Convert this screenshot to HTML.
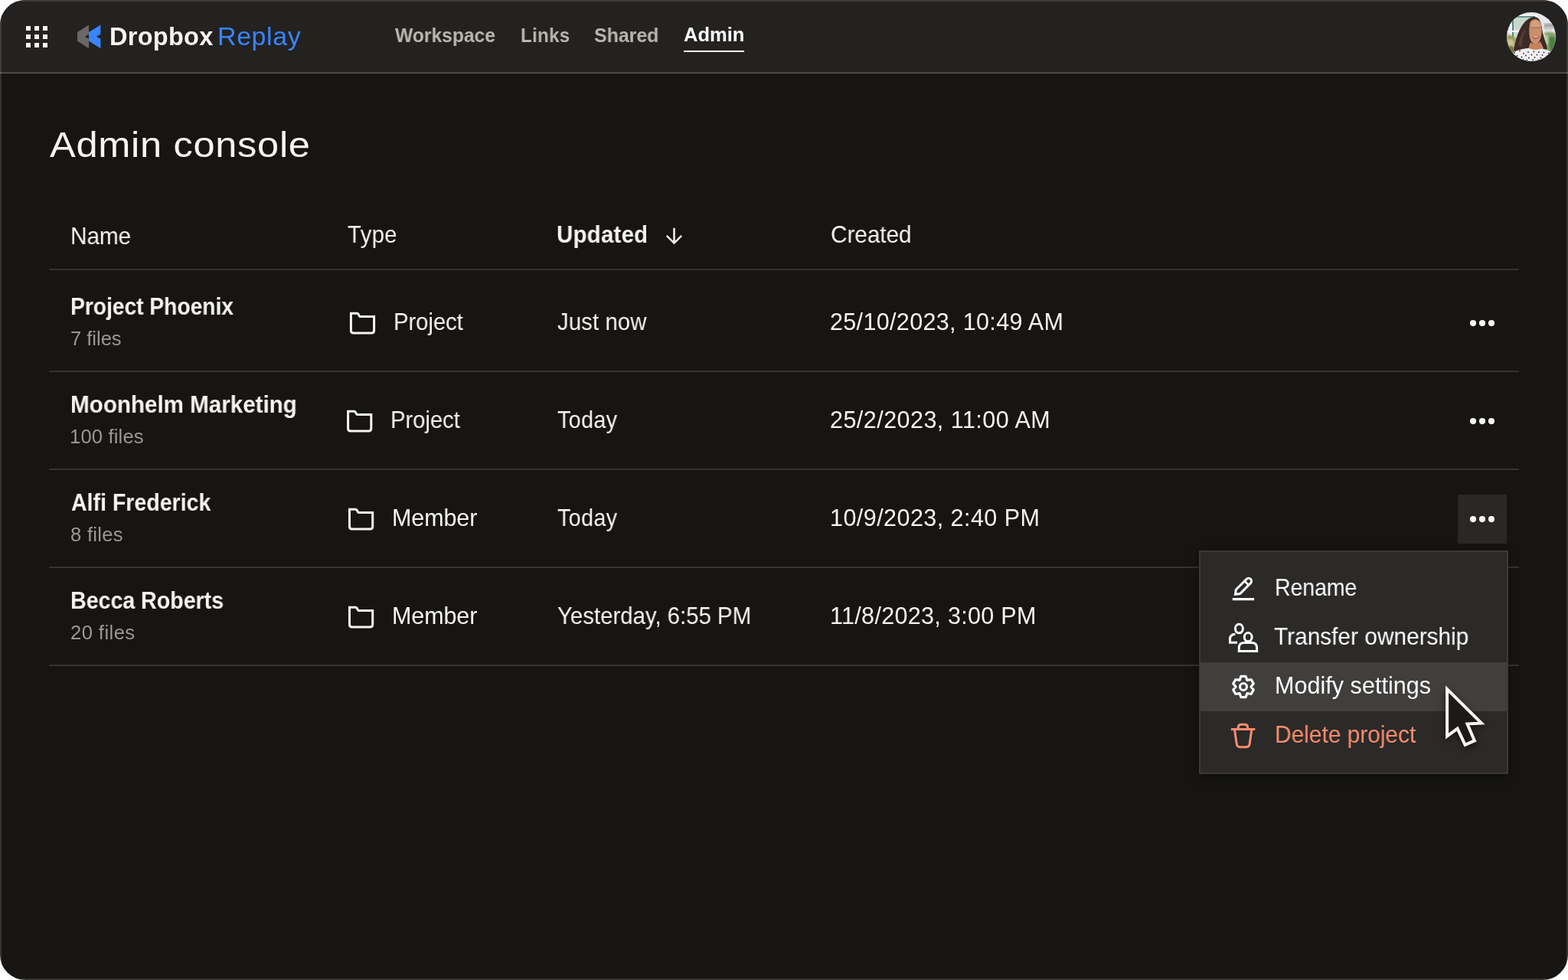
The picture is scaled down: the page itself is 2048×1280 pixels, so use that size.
<!DOCTYPE html>
<html lang="en">
<head>
<meta charset="utf-8">
<meta name="viewport" content="width=2048">
<title>Dropbox Replay – Admin console</title>
<style>
*{box-sizing:border-box;margin:0;padding:0}
html,body{width:2048px;height:1280px;overflow:hidden;background:#fff}
body{font-family:"Liberation Sans",Arial,Helvetica,sans-serif;color:#f7f5f2;position:relative}
.frame{position:absolute;left:0;top:0;width:2048px;height:1280px;border-radius:33px;background:#161513;overflow:hidden}
.frame-border{position:absolute;left:0;top:0;width:2048px;height:1280px;border:2px solid rgba(255,255,255,.13);pointer-events:none;z-index:50}
header{position:absolute;left:0;top:0;width:2048px;height:96px;background:linear-gradient(to bottom,#232220 0,#232220 94px,#3d3c3a 94px,#3d3c3a 95px,#5a5958 95px,#5a5958 96px)}
a{color:inherit;text-decoration:none}
h1{font-weight:400}
.t{position:absolute;white-space:nowrap;line-height:1;font-weight:400;color:#f7f5f2;will-change:transform}
.b{font-weight:700}
.sub{color:#9a9792}
.blue{color:#3984ff}
.nav{color:#bbb5ae;font-weight:700}
.nav.on{color:#fff}
.navline{position:absolute;left:893px;top:66px;width:79px;height:2px;background:#fff}
.hl{position:absolute;left:64px;width:1920px;height:2px;background:#343331}
svg{position:absolute;overflow:visible}
.more{position:absolute;left:1904px;width:64px;height:64px}
.more.open{background:#292826}
.menu{position:absolute;left:1566px;top:719px;width:404px;height:292px;background:#2b2a28;border:2px solid #3b3936;box-shadow:0 4px 14px rgba(0,0,0,.35);list-style:none}
.menu li{list-style:none}
.menu li.sel::before{content:"";position:absolute;left:0;top:144px;width:400px;height:64px;background:#403f3d}
.mi{color:#fff}
.del{color:#fa8d6e}
</style>
</head>
<body>
<div class="frame">
<header>
  <svg width="30" height="30" style="left:33px;top:33px" viewBox="0 0 30 30" role="img" aria-label="Apps">
    <g fill="#f7f5f2">
      <rect x="1" y="1" width="6" height="6"/><rect x="12" y="1" width="6" height="6"/><rect x="23" y="1" width="6" height="6"/>
      <rect x="1" y="12" width="6" height="6"/><rect x="12" y="12" width="6" height="6"/><rect x="23" y="12" width="6" height="6"/>
      <rect x="1" y="23" width="6" height="6"/><rect x="12" y="23" width="6" height="6"/><rect x="23" y="23" width="6" height="6"/>
    </g>
  </svg>
  <a class="brand" aria-label="Dropbox Replay">
    <svg width="32" height="32" style="left:100px;top:32px" aria-hidden="true"><g transform="translate(-100 -32)"><path fill="#6b6764" d="M116 32.4 L101 42 L101 53.6 L116 63.2 L116 50.8 L110.9 47.8 L116 44.8 Z"/><path fill="#3984ff" d="M131.4 32.4 L116 42 L116 53.6 L131.4 63.2 L131.4 50.8 L125.9 47.8 L131.4 44.8 Z"/></g></svg>
    <span class="t b" id="logo1" style="left:143.30px;top:32.08px;font-size:32.5px;letter-spacing:0.279px">Dropbox</span>
    <span class="t blue" id="logo2" style="left:284.08px;top:29.81px;font-size:34px;letter-spacing:0.573px">Replay</span>
  </a>
  <nav aria-label="Primary">
    <a class="t nav" id="nav1" style="left:516.20px;top:34.31px;font-size:25.5px;letter-spacing:-0.066px;transform:scaleX(0.969);transform-origin:0 50%">Workspace</a>
    <a class="t nav" id="nav2" style="left:679.68px;top:34.31px;font-size:25.5px;letter-spacing:0.390px;transform:scaleX(0.94);transform-origin:0 50%">Links</a>
    <a class="t nav" id="nav3" style="left:776.30px;top:34.31px;font-size:25.5px;letter-spacing:-0.076px;transform:scaleX(0.98);transform-origin:0 50%">Shared</a>
    <a class="t nav on" id="nav4" aria-current="page" style="left:892.56px;top:32.51px;font-size:25.5px;letter-spacing:-0.012px">Admin</a>
    <span class="navline"></span>
  </nav>
  <svg width="64" height="64" style="left:1968px;top:16px" viewBox="0 0 64 64" role="img" aria-label="User avatar">
  <defs>
    <clipPath id="av"><circle cx="32" cy="32" r="32"/></clipPath>
    <filter id="avb" x="-10%" y="-10%" width="120%" height="120%"><feGaussianBlur stdDeviation="0.7"/></filter>
    <filter id="avb2" x="-20%" y="-20%" width="140%" height="140%"><feGaussianBlur stdDeviation="1.3"/></filter>
  </defs>
  <g clip-path="url(#av)">
    <rect width="64" height="64" fill="#e7e8ea"/>
    <g filter="url(#avb)">
      <rect x="4" y="3" width="36" height="40" fill="#f1f2f1"/>
      <rect x="9" y="6.5" width="28" height="17" fill="#c7d8cb"/>
      <rect x="9" y="26" width="14" height="14" fill="#cfdccf"/>
      <rect x="11" y="5" width="26" height="1.8" fill="#5e8a8d"/>
      <rect x="7" y="9" width="2" height="30" fill="#5a858a"/>
      <rect x="0" y="23.8" width="18" height="2.2" fill="#f4f5f4"/>
      <rect x="48.5" y="14" width="13" height="8" fill="#c4c4c7"/>
      <rect x="49.5" y="15.5" width="11" height="3.5" fill="#aaaaae"/>
      <rect x="50" y="22" width="9" height="3" fill="#dcdcd8"/>
    </g>
    <g filter="url(#avb2)">
      <path d="M0 30 Q6 28 12 34 L14 52 L0 56 Z" fill="#9a9d58"/>
      <path d="M1 36 Q5 33 9 38 L10 46 L2 47 Z" fill="#c9c79a"/>
      <path d="M2 44 Q7 42 11 47 L11 54 L3 55 Z" fill="#6f7a3a"/>
      <path d="M49 27 Q56 24 64 28 V52 H52 Z" fill="#7fa066"/>
      <path d="M55 33 Q60 30 64 34 V50 H56 Z" fill="#4f7c43"/>
      <path d="M49 30 Q52 28 54 32 L54 42 L50 42 Z" fill="#b9cfa8"/>
    </g>
    <g filter="url(#avb)">
      <path d="M35 6 C29 7 23 12 19 19 C15 26 12.5 33 10.5 42 C9.5 47 9.5 50 10 52 L30 52 L50 50 C53.5 49 53 47 52 43 C50.5 38 48.5 33 47 27 C46 19 44.5 12 42 9 C40 6.5 37.5 5.8 35 6 Z" fill="#3b2a25"/>
      <path d="M22 22 C19 28 16 36 15 44 L20 46 C20 38 22 30 25 24 Z" fill="#513a31"/>
      <path d="M30 15 C31 10.5 35 9 38 9.3 C42 9.8 45 13 45.6 19 C46.2 25 45.5 31 43.5 36 C42 39.5 40 41.5 37.5 41.5 C34.5 41.5 32 39 30.6 35 C29 30 29 21 30 15 Z" fill="#c98f6b"/>
      <path d="M33 12 C35 10.5 39 10.5 41.5 13 C43 15 43.5 18 43.5 20 L32 20 C32 17 32 14 33 12 Z" fill="#d6a07c"/>
      <path d="M30.5 20 H45.5" stroke="#8a6a5c" stroke-width="0.9" fill="none"/>
      <path d="M33.5 31 Q37.8 33 42 30.6 Q41.5 34.8 37.8 35 Q34.5 35 33.5 31 Z" fill="#b5525c"/>
      <path d="M34.3 31.3 Q37.8 32.8 41.3 31 Q40.5 33 37.8 33.1 Q35.3 33.1 34.3 31.3 Z" fill="#f3e6e0"/>
      <path d="M31 39 C33 42 41 42 44 38 L48 47 C44 50 34 50 28 48 Z" fill="#c4835f"/>
      <path d="M7 54 C10 50 20 47.5 29 47 C33 49.5 41 49.5 46 47.5 C52 48.5 57 51 60 54 L58 66 H8 Z" fill="#f2f0f1"/>
    </g>
    <g fill="#2c2c46">
      <circle cx="10" cy="53" r="0.9"/><circle cx="17" cy="50.5" r="0.9"/><circle cx="22" cy="54" r="0.9"/><circle cx="28" cy="52" r="0.9"/>
      <circle cx="35.5" cy="51.5" r="0.9"/><circle cx="42" cy="52" r="0.9"/><circle cx="48.5" cy="52.5" r="0.9"/><circle cx="54.5" cy="53.5" r="0.9"/>
      <circle cx="13.5" cy="57" r="0.9"/><circle cx="19.5" cy="58.5" r="0.9"/><circle cx="25" cy="56.5" r="0.9"/><circle cx="32.5" cy="55.5" r="0.9"/>
      <circle cx="39.5" cy="55.5" r="0.9"/><circle cx="46.5" cy="56" r="0.9"/><circle cx="52" cy="57.5" r="0.9"/>
      <circle cx="21.5" cy="62" r="0.9"/><circle cx="29" cy="59.5" r="0.9"/><circle cx="36.5" cy="59" r="0.9"/><circle cx="44.5" cy="59.5" r="0.9"/>
      <circle cx="34" cy="62.5" r="0.9"/><circle cx="41.5" cy="62.5" r="0.9"/><circle cx="26.5" cy="62.8" r="0.9"/>
    </g>
  </g>
</svg>
</header>
<main>
  <h1 class="t" id="title" style="left:65.20px;top:166.05px;font-size:46px;letter-spacing:0.610px;transform:scaleX(1.1);transform-origin:0 50%">Admin console</h1>
  <div role="table" aria-label="Projects and members">
    <div role="row" class="thead">
      <span class="t" id="h1" role="columnheader" style="left:92.15px;top:293.38px;font-size:30.5px;letter-spacing:-0.100px;transform:scaleX(0.977);transform-origin:0 50%">Name</span>
      <span class="t" id="h2" role="columnheader" style="left:453.62px;top:291.28px;font-size:30.5px;letter-spacing:0.479px;transform:scaleX(0.955);transform-origin:0 50%">Type</span>
      <span class="t b" id="h3" role="columnheader" aria-sort="descending" style="left:727.48px;top:291.28px;font-size:30.5px;letter-spacing:0.202px;transform:scaleX(0.967);transform-origin:0 50%">Updated</span>
      <span class="t" id="h4" role="columnheader" style="left:1084.52px;top:291.28px;font-size:30.5px;letter-spacing:-0.071px;transform:scaleX(0.977);transform-origin:0 50%">Created</span>
      <svg width="26" height="24" style="left:868px;top:296px" role="img" aria-label="Sorted descending"><g transform="translate(-868 -296)"><path d="M880.5 297.8 V317.6 M870.8 307.9 L880.5 317.6 L890.2 307.9" fill="none" stroke="#f7f5f2" stroke-width="2.5"/></g></svg>
    </div>
    <div class="hl" style="top:351px"></div>
    <div role="row">
      <span class="t b" id="r0n" role="cell" style="left:92.14px;top:384.58px;font-size:30.5px;letter-spacing:-0.068px;transform:scaleX(0.928);transform-origin:0 50%">Project Phoenix</span>
      <span class="t sub" id="r0s" style="left:92.00px;top:429.72px;font-size:25.6px;letter-spacing:-0.039px;transform:scaleX(0.998);transform-origin:0 50%">7 files</span>
      <svg class="ico" width="34" height="29" style="left:456px;top:407px" aria-hidden="true"><g transform="translate(-456 -407)"><path d="M1.6 1.6 H9.6 Q10.7 1.6 11.2 2.6 L12.6 5 Q13.1 5.9 14.2 5.9 H31.8 V24.1 Q31.8 27.3 28.6 27.3 H4.8 Q1.6 27.3 1.6 24.1 Z" transform="translate(456.8 407.7)" fill="none" stroke="#f7f5f2" stroke-width="3"/></g></svg>
      <span class="t" id="r0t" role="cell" style="left:514.28px;top:405.28px;font-size:30.5px;letter-spacing:-0.071px;transform:scaleX(0.961);transform-origin:0 50%">Project</span>
      <span class="t" id="r0u" role="cell" style="left:728.30px;top:405.28px;font-size:30.5px;letter-spacing:0.149px;transform:scaleX(0.958);transform-origin:0 50%">Just now</span>
      <span class="t" id="r0c" role="cell" style="left:1084.00px;top:405.28px;font-size:30.5px;letter-spacing:0.342px">25/10/2023, 10:49 AM</span>
      <span class="more" role="button" aria-label="More actions" aria-haspopup="menu" aria-expanded="false" style="top:390px"></span>
      <svg width="34" height="10" style="left:1919px;top:417px" aria-hidden="true"><g transform="translate(-1919 -417)"><circle cx="1924" cy="422.1" r="4.1" fill="#fbfaf8"/><circle cx="1936" cy="422.1" r="4.1" fill="#fbfaf8"/><circle cx="1948" cy="422.1" r="4.1" fill="#fbfaf8"/></g></svg>
    </div>
    <div class="hl" style="top:484px"></div>
    <div role="row">
      <span class="t b" id="r1n" role="cell" style="left:92.05px;top:512.58px;font-size:30.5px;letter-spacing:-0.075px;transform:scaleX(0.974);transform-origin:0 50%">Moonhelm Marketing</span>
      <span class="t sub" id="r1s" style="left:91.30px;top:557.73px;font-size:25.6px;letter-spacing:0.159px">100 files</span>
      <svg class="ico" width="34" height="29" style="left:453px;top:535px" aria-hidden="true"><g transform="translate(-453 -535)"><path d="M1.6 1.6 H9.6 Q10.7 1.6 11.2 2.6 L12.6 5 Q13.1 5.9 14.2 5.9 H31.8 V24.1 Q31.8 27.3 28.6 27.3 H4.8 Q1.6 27.3 1.6 24.1 Z" transform="translate(453.0 535.7)" fill="none" stroke="#f7f5f2" stroke-width="3"/></g></svg>
      <span class="t" id="r1t" role="cell" style="left:510.38px;top:533.28px;font-size:30.5px;letter-spacing:-0.071px;transform:scaleX(0.961);transform-origin:0 50%">Project</span>
      <span class="t" id="r1u" role="cell" style="left:727.79px;top:533.28px;font-size:30.5px;letter-spacing:0.351px;transform:scaleX(0.943);transform-origin:0 50%">Today</span>
      <span class="t" id="r1c" role="cell" style="left:1084.00px;top:533.28px;font-size:30.5px;letter-spacing:0.465px">25/2/2023, 11:00 AM</span>
      <span class="more" role="button" aria-label="More actions" aria-haspopup="menu" aria-expanded="false" style="top:518px"></span>
      <svg width="34" height="10" style="left:1919px;top:545px" aria-hidden="true"><g transform="translate(-1919 -545)"><circle cx="1924" cy="550.1" r="4.1" fill="#fbfaf8"/><circle cx="1936" cy="550.1" r="4.1" fill="#fbfaf8"/><circle cx="1948" cy="550.1" r="4.1" fill="#fbfaf8"/></g></svg>
    </div>
    <div class="hl" style="top:612px"></div>
    <div role="row">
      <span class="t b" id="r2n" role="cell" style="left:93.30px;top:640.58px;font-size:30.5px;letter-spacing:0.020px;transform:scaleX(0.934);transform-origin:0 50%">Alfi Frederick</span>
      <span class="t sub" id="r2s" style="left:92.00px;top:685.73px;font-size:25.6px;letter-spacing:0.273px">8 files</span>
      <svg class="ico" width="34" height="29" style="left:454px;top:663px" aria-hidden="true"><g transform="translate(-454 -663)"><path d="M1.6 1.6 H9.6 Q10.7 1.6 11.2 2.6 L12.6 5 Q13.1 5.9 14.2 5.9 H31.8 V24.1 Q31.8 27.3 28.6 27.3 H4.8 Q1.6 27.3 1.6 24.1 Z" transform="translate(454.9 663.7)" fill="none" stroke="#f7f5f2" stroke-width="3"/></g></svg>
      <span class="t" id="r2t" role="cell" style="left:512.21px;top:661.28px;font-size:30.5px;letter-spacing:-0.093px;transform:scaleX(0.996);transform-origin:0 50%">Member</span>
      <span class="t" id="r2u" role="cell" style="left:727.79px;top:661.28px;font-size:30.5px;letter-spacing:0.351px;transform:scaleX(0.943);transform-origin:0 50%">Today</span>
      <span class="t" id="r2c" role="cell" style="left:1084.00px;top:661.28px;font-size:30.5px;letter-spacing:0.452px">10/9/2023, 2:40 PM</span>
      <span class="more open" role="button" aria-label="More actions" aria-haspopup="menu" aria-expanded="true" style="top:646px"></span>
      <svg width="34" height="10" style="left:1919px;top:673px" aria-hidden="true"><g transform="translate(-1919 -673)"><circle cx="1924" cy="678.1" r="4.1" fill="#fbfaf8"/><circle cx="1936" cy="678.1" r="4.1" fill="#fbfaf8"/><circle cx="1948" cy="678.1" r="4.1" fill="#fbfaf8"/></g></svg>
    </div>
    <div class="hl" style="top:740px"></div>
    <div role="row">
      <span class="t b" id="r3n" role="cell" style="left:92.12px;top:768.58px;font-size:30.5px;letter-spacing:-0.080px;transform:scaleX(0.941);transform-origin:0 50%">Becca Roberts</span>
      <span class="t sub" id="r3s" style="left:92.00px;top:813.73px;font-size:25.6px;letter-spacing:0.429px">20 files</span>
      <svg class="ico" width="34" height="29" style="left:454px;top:791px" aria-hidden="true"><g transform="translate(-454 -791)"><path d="M1.6 1.6 H9.6 Q10.7 1.6 11.2 2.6 L12.6 5 Q13.1 5.9 14.2 5.9 H31.8 V24.1 Q31.8 27.3 28.6 27.3 H4.8 Q1.6 27.3 1.6 24.1 Z" transform="translate(454.9 791.7)" fill="none" stroke="#f7f5f2" stroke-width="3"/></g></svg>
      <span class="t" id="r3t" role="cell" style="left:512.21px;top:789.28px;font-size:30.5px;letter-spacing:-0.093px;transform:scaleX(0.996);transform-origin:0 50%">Member</span>
      <span class="t" id="r3u" role="cell" style="left:728.13px;top:789.28px;font-size:30.5px;letter-spacing:-0.013px;transform:scaleX(0.964);transform-origin:0 50%">Yesterday, 6:55 PM</span>
      <span class="t" id="r3c" role="cell" style="left:1084.00px;top:789.28px;font-size:30.5px;letter-spacing:0.321px">11/8/2023, 3:00 PM</span>
    </div>
    <div class="hl" style="top:868px"></div>
  </div>
</main>
  <ul class="menu" role="menu" aria-label="Row actions">
    <li role="menuitem">
      <svg width="40" height="40" style="left:36px;top:27px" aria-hidden="true"><g transform="translate(-1604 -748)"><rect x="1609.8" y="781" width="28.3" height="3.2" fill="#ffffff"/><g transform="translate(1611.8 778) rotate(-45)" fill="none" stroke="#ffffff" stroke-width="3"><path d="M2.4 0 L7.3 -3.75 H26.9 A3.75 3.75 0 0 1 26.9 3.75 H7.3 Z"/><path d="M23.2 -3.75 V3.75" stroke-width="2.6"/></g></g></svg>
      <span class="t mi" id="m1" style="left:96.93px;top:31.38px;font-size:30.5px;letter-spacing:-0.090px;transform:scaleX(0.935);transform-origin:0 50%">Rename</span>
    </li>
    <li role="menuitem">
      <svg width="40" height="40" style="left:36px;top:91px" aria-hidden="true"><g transform="translate(-1604 -812)"><g fill="none" stroke="#ffffff" stroke-width="3"><ellipse cx="1618.4" cy="821.1" rx="5" ry="5.75"/><path d="M1616 839.3 H1606.5 V835 Q1606.5 828.4 1613.4 828.2"/><ellipse cx="1630.2" cy="832.2" rx="4.9" ry="5.6"/><path d="M1618.3 850.6 V846.2 Q1618.3 839.4 1625 839.4 H1635 Q1641.6 839.4 1641.6 846.2 V850.6 Z"/></g></g></svg>
      <span class="t mi" id="m2" style="left:96.08px;top:95.38px;font-size:30.5px;letter-spacing:0.005px;transform:scaleX(0.978);transform-origin:0 50%">Transfer ownership</span>
    </li>
    <li role="menuitem" class="sel">
      <svg width="40" height="40" style="left:36px;top:156px" aria-hidden="true"><g transform="translate(-1604 -877)"><g fill="none" stroke="#ffffff" stroke-width="3"><circle cx="1624" cy="897" r="4.5" stroke-width="3.1"/><path d="M1627.13 883.46 L1620.87 883.46 L1619.05 888.43 L1613.83 887.52 L1610.71 892.94 L1614.10 897.00 L1610.71 901.06 L1613.83 906.48 L1619.05 905.57 L1620.87 910.54 L1627.13 910.54 L1628.95 905.57 L1634.17 906.48 L1637.29 901.06 L1633.90 897.00 L1637.29 892.94 L1634.17 887.52 L1628.95 888.43 Z" stroke-width="3.2" stroke-linejoin="round"/></g></g></svg>
      <span class="t mi" id="m3" style="left:96.80px;top:159.38px;font-size:30.5px;letter-spacing:0.045px">Modify settings</span>
    </li>
    <li role="menuitem">
      <svg width="40" height="40" style="left:36px;top:220px" aria-hidden="true"><g transform="translate(-1604 -941)"><g fill="none" stroke="#fa8d6e" stroke-width="3" stroke-linejoin="round"><path d="M1607.9 952.6 H1639.3"/><path d="M1617.2 952 V950.3 Q1617.2 946.3 1621.2 946.3 H1625.6 Q1629.6 946.3 1629.6 950.3 V952"/><path d="M1612.4 952.6 L1615.3 971.9 Q1615.8 975.7 1619.4 975.7 H1628 Q1631.6 975.7 1632.1 971.9 L1634.9 952.6"/></g></g></svg>
      <span class="t mi del" id="m4" style="left:96.83px;top:223.38px;font-size:30.5px;letter-spacing:-0.057px;transform:scaleX(0.983);transform-origin:0 50%">Delete project</span>
    </li>
  </ul>
  <svg class="cursor" width="58" height="88" style="left:1884px;top:892px;z-index:20;filter:drop-shadow(0 3px 5px rgba(0,0,0,.5))" aria-hidden="true"><g transform="translate(-1884 -892)"><path d="M1890.1 900 L1890.1 961.6 L1903.6 951.6 L1913.6 972.9 L1925.9 967.4 L1916.5 945.6 L1935 944.6 Z" fill="#1e1919" stroke="#f7f5f2" stroke-width="4" stroke-linejoin="miter"/></g></svg>
<div class="frame-border"></div>
</div>
</body>
</html>
